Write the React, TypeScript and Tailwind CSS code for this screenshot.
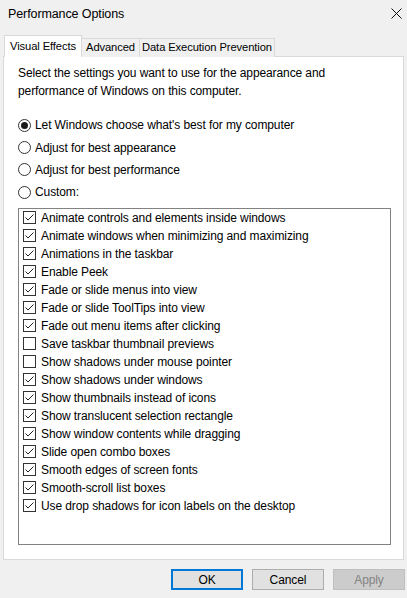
import React from 'react';

const effects: { label: string; checked: boolean }[] = [
  { label: 'Animate controls and elements inside windows', checked: true },
  { label: 'Animate windows when minimizing and maximizing', checked: true },
  { label: 'Animations in the taskbar', checked: true },
  { label: 'Enable Peek', checked: true },
  { label: 'Fade or slide menus into view', checked: true },
  { label: 'Fade or slide ToolTips into view', checked: true },
  { label: 'Fade out menu items after clicking', checked: true },
  { label: 'Save taskbar thumbnail previews', checked: false },
  { label: 'Show shadows under mouse pointer', checked: false },
  { label: 'Show shadows under windows', checked: true },
  { label: 'Show thumbnails instead of icons', checked: true },
  { label: 'Show translucent selection rectangle', checked: true },
  { label: 'Show window contents while dragging', checked: true },
  { label: 'Slide open combo boxes', checked: true },
  { label: 'Smooth edges of screen fonts', checked: true },
  { label: 'Smooth-scroll list boxes', checked: true },
  { label: 'Use drop shadows for icon labels on the desktop', checked: true },
];

const radios = [
  { label: "Let Windows choose what's best for my computer", selected: true },
  { label: 'Adjust for best appearance', selected: false },
  { label: 'Adjust for best performance', selected: false },
  { label: 'Custom:', selected: false },
];

function Radio({ selected }: { selected: boolean }) {
  return (
    <div className="w-[13px] h-[13px] rounded-full border border-[#333] bg-white flex items-center justify-center shrink-0">
      {selected && <div className="w-[7px] h-[7px] rounded-full bg-[#1a1a1a]" />}
    </div>
  );
}

function CheckBox({ checked }: { checked: boolean }) {
  return (
    <div className="w-[13px] h-[13px] border border-[#333] bg-white shrink-0 flex items-center justify-center">
      {checked && (
        <svg width="11" height="11" viewBox="0 0 11 11">
          <polyline points="1.5,5.5 4,8 9.5,2.5" fill="none" stroke="#222" strokeWidth="1" />
        </svg>
      )}
    </div>
  );
}

export default function App() {
  return (
    <div
      className="w-[407px] h-[598px] bg-[#f0f0f0] text-[12px] tracking-[-0.1px] text-black flex flex-col overflow-hidden"
      style={{ fontFamily: '"Liberation Sans", Arial, sans-serif' }}
    >
      {/* Title bar */}
      <div className="h-[35px] flex items-start pt-[6px] pl-[8px] pr-[4px] justify-between">
        <span className="text-[12.5px] leading-[16px]">Performance Options</span>
        <svg width="11" height="11" viewBox="0 0 11 11" className="mt-[2px] mr-[1px]">
          <path d="M0.5 0.5 L10.5 10.5 M10.5 0.5 L0.5 10.5" stroke="#111" strokeWidth="1" />
        </svg>
      </div>

      {/* Tabs */}
      <div className="h-[22px] -mb-px flex items-end pl-[4px] relative z-10 text-[11.2px] whitespace-nowrap">
        <div className="h-[22px] w-[78px] shrink-0 bg-white border border-b-0 border-[#d9d9d9] flex items-center justify-center leading-none">
          Visual Effects
        </div>
        <div className="h-[19px] w-[58px] shrink-0 bg-[#f0f0f0] border border-l-0 border-b-0 border-[#d9d9d9] flex items-center justify-center leading-none">
          Advanced
        </div>
        <div className="h-[19px] w-[135px] shrink-0 bg-[#f0f0f0] border border-l-0 border-b-0 border-[#d9d9d9] flex items-center justify-center leading-none">
          Data Execution Prevention
        </div>
      </div>

      {/* Panel */}
      <div className="mx-[3px] h-[504px] bg-white border border-[#d9d9d9] flex flex-col pl-[14px] pr-[12px] pt-[7px]">
        <p className="leading-[18px]">
          Select the settings you want to use for the appearance and
          <br />
          performance of Windows on this computer.
        </p>
        <div className="mt-[14px] flex flex-col">
          {radios.map((r) => (
            <div key={r.label} className="h-[22.4px] flex items-center gap-[4px]">
              <Radio selected={r.selected} />
              <span>{r.label}</span>
            </div>
          ))}
        </div>
        <div className="mt-[4px] h-[337px] border border-[#828282] flex flex-col pl-[4px]">
          {effects.map((e) => (
            <div key={e.label} className="h-[18px] flex items-center gap-[5px]">
              <CheckBox checked={e.checked} />
              <span>{e.label}</span>
            </div>
          ))}
        </div>
      </div>

      {/* Buttons */}
      <div className="mt-[9px] flex justify-end gap-[9px] pr-[2px]">
        <button className="w-[72px] h-[21px] bg-[#e1e1e1] border-2 border-[#0078d7] flex items-center justify-center">
          OK
        </button>
        <button className="w-[72px] h-[21px] bg-[#e1e1e1] border border-[#adadad] flex items-center justify-center">
          Cancel
        </button>
        <button className="w-[72px] h-[21px] bg-[#cccccc] border border-[#bfbfbf] text-[#838383] flex items-center justify-center">
          Apply
        </button>
      </div>
    </div>
  );
}
